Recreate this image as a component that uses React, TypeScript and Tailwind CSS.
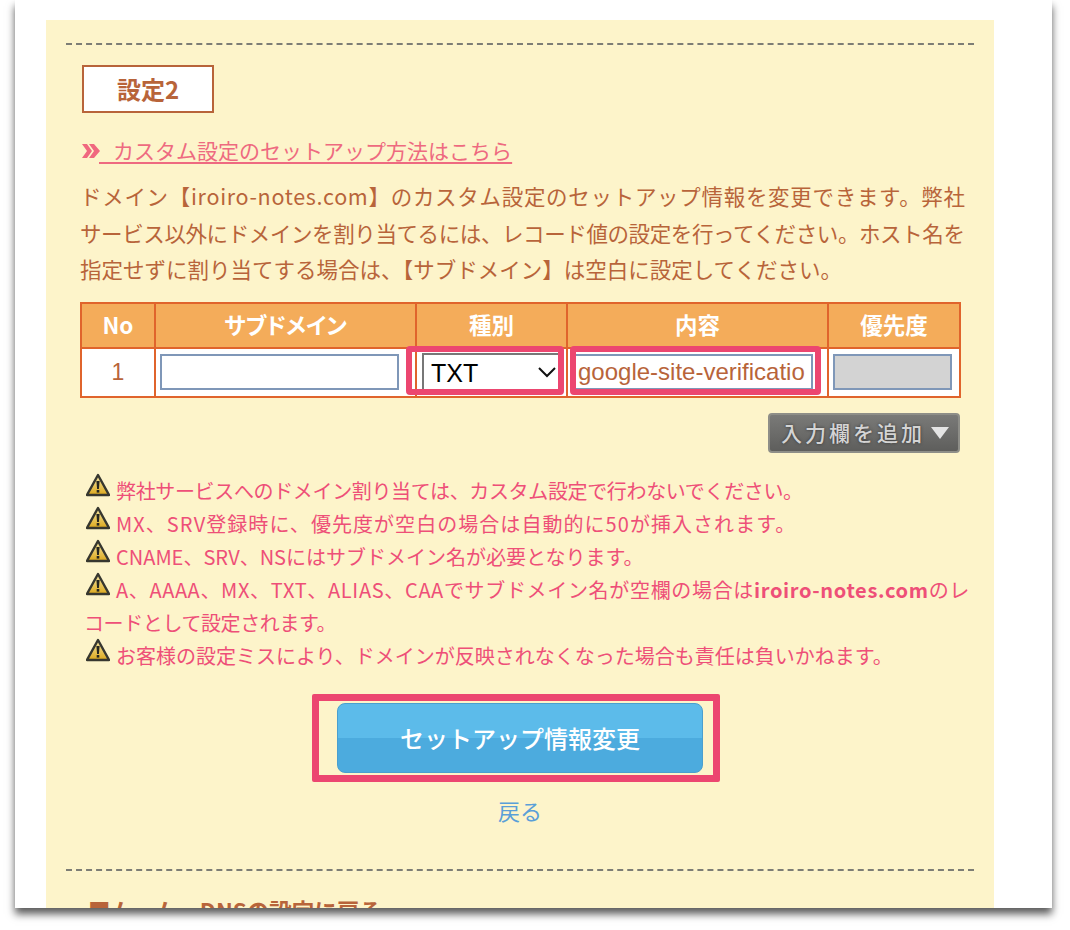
import React from "react";

const jp = "font-['Noto_Sans_CJK_JP','Noto_Sans',sans-serif]";

function Warn() {
  return (
    <svg width="24" height="24" viewBox="0 0 24 24" className="shrink-0">
      <defs>
        <linearGradient id="wg" x1="0" y1="0" x2="0" y2="1">
          <stop offset="0" stopColor="#f5e8a8" />
          <stop offset="1" stopColor="#dca81c" />
        </linearGradient>
      </defs>
      <path d="M12 2 L23 22 H1 Z" fill="url(#wg)" stroke="#37372f" strokeWidth="2.4" strokeLinejoin="round" />
      <path d="M10.4 8 H13.6 L12.9 16 H11.1 Z" fill="#26261f" />
      <rect x="10.7" y="17" width="2.6" height="2.6" fill="#26261f" />
    </svg>
  );
}

function Note({ children, className }: { children: React.ReactNode; className?: string }) {
  return (
    <div className="flex items-start h-[33px] whitespace-nowrap">
      <span className="w-[36px] pl-[6px] mt-[-1px] shrink-0"><Warn /></span>
      <span className={className}>{children}</span>
    </div>
  );
}

const th = "border-2 border-[#e0642c] bg-[#f4ac5a] text-white font-bold text-[22.5px] h-[45px] p-0 text-center [font-feature-settings:'palt']";
const td = "border-2 border-[#e0642c] bg-white p-0 relative h-[49px]";

export default function App() {
  return (
    <div className={`h-[930px] w-[1070px] bg-white overflow-hidden ${jp}`}>
      <div className="ml-[15px] w-[1037px] h-[908px] bg-white overflow-hidden pl-[31px] pt-[20px] shadow-[0_6px_8px_rgba(0,0,0,0.65)]">
        <div className="w-[948px] h-[900px] bg-[#fdf4ca] px-[20px] pt-[23px] text-[#b8643a]">
          <div className="border-t-2 border-dashed border-[#7d7d75]" />
          <div className="pl-[14px] pr-[2px]">
            <div className="ml-[2px] mt-[20px] w-[132px] h-[48px] border-2 border-[#b8643a] bg-white flex items-center justify-center font-bold text-[24px]">
              設定2
            </div>
            <div className="mt-[20px] h-[36px] flex items-center ml-[2px] text-[21px] text-[#ee6a80] whitespace-nowrap">
              <svg width="18" height="16" viewBox="0 0 18 16" className="shrink-0">
                <path d="M0 1 H5 L10 8 L5 15 H0 L5 8 Z M7 1 H12 L18 8 L12 15 H7 L12 8 Z" fill="#f0687f" />
              </svg>
              <a className="ml-[-1px] underline underline-offset-[3px] decoration-[1.5px] whitespace-pre">   カスタム設定のセットアップ方法はこちら</a>
            </div>
            <p className="mt-[9px] text-[21.5px] leading-[36.5px] whitespace-nowrap">
              <span className="tracking-[0.7px]">ドメイン【iroiro-notes.com】のカスタム設定のセットアップ情報を変更できます。弊社</span>
              <br />
              <span className="tracking-[-0.4px]">サービス以外にドメインを割り当てるには、レコード値の設定を行ってください。ホスト名を</span>
              <br />
              指定せずに割り当てする場合は、【サブドメイン】は空白に設定してください。
            </p>
            <table className="mt-[14px] w-[879px] border-collapse table-fixed">
              <colgroup>
                <col className="w-[74px]" />
                <col className="w-[261px]" />
                <col className="w-[151px]" />
                <col className="w-[261px]" />
                <col className="w-[132px]" />
              </colgroup>
              <thead>
                <tr>
                  <th className={th}>No</th>
                  <th className={th}>サブドメイン</th>
                  <th className={th}>種別</th>
                  <th className={th}>内容</th>
                  <th className={th}>優先度</th>
                </tr>
              </thead>
              <tbody>
                <tr>
                  <td className={`${td} text-center text-[23px] font-['Liberation_Sans',sans-serif]`}>1</td>
                  <td className={td}>
                    <div className="pl-[4px] pr-[16px]">
                      <input className="block w-full h-[36px] border-2 border-[#7f97b8] bg-white" />
                    </div>
                  </td>
                  <td className={td}>
                    <div className="relative ml-[5px] mr-[5px] h-[38px] border-l-2 border-t-2 border-[#777] bg-white">
                      <select defaultValue="TXT" className="appearance-none block w-full h-full bg-white text-black text-[25px] pl-[7px] pb-[3px] font-['Liberation_Sans',sans-serif] outline-none">
                        <option>TXT</option>
                      </select>
                      <svg width="20" height="12" viewBox="0 0 20 12" className="absolute right-[4px] top-[11px]">
                        <path d="M2 2 L10 10 L18 2" fill="none" stroke="#111" strokeWidth="2" />
                      </svg>
                    </div>
                    <div className="absolute left-[-11px] top-[-3px] w-[158px] h-[49px] border-[6px] border-[#ec4670] rounded-[4px]" />
                  </td>
                  <td className={td}>
                    <div className="pl-[5px] pr-[14px]">
                      <input readOnly value="google-site-verificatio" className="block w-full h-[36px] border-2 border-[#7f97b8] bg-white text-[#b8643a] text-[24px] pl-[3px] font-['Liberation_Sans',sans-serif]" />
                    </div>
                    <div className="absolute left-[2px] top-[-3px] w-[251px] h-[49px] border-[6px] border-[#ec4670] rounded-[4px]" />
                  </td>
                  <td className={td}>
                    <div className="pl-[4px] pr-[7px]">
                      <input disabled className="block w-full h-[36px] border-2 border-[#7f97b8] bg-[#d3d3d3]" />
                    </div>
                  </td>
                </tr>
              </tbody>
            </table>
            <div className="w-[880px] flex justify-end mt-[15px]">
              <button className="w-[192px] h-[40px] rounded-[4px] bg-[linear-gradient(#7a7a78,#5e5e5c)] border-2 border-[#8e8e88] flex items-center pl-[11px] gap-[5px] text-[#d4d4d4] font-medium text-[21px] tracking-[3px] [text-shadow:0_0_3px_#333]">
                入力欄を追加
                <svg width="20" height="14" viewBox="0 0 20 14"><path d="M1 1 H19 L10 13 Z" fill="#e4e4e4" /></svg>
              </button>
            </div>
            <div className="mt-[21px] text-[#ee4f78] text-[20px] leading-[33px]">
              <Note className="tracking-[-0.35px]">弊社サービスへのドメイン割り当ては、カスタム設定で行わないでください。</Note>
              <Note className="tracking-[1.05px]">MX、SRV登録時に、優先度が空白の場合は自動的に50が挿入されます。</Note>
              <Note>CNAME、SRV、NSにはサブドメイン名が必要となります。</Note>
              <Note className="tracking-[0.67px]">A、AAAA、MX、TXT、ALIAS、CAAでサブドメイン名が空欄の場合は<b className="font-bold">iroiro-notes.com</b>のレ</Note>
              <div className="h-[33px] pl-[4px] tracking-[-0.4px]">コードとして設定されます。</div>
              <Note>お客様の設定ミスにより、ドメインが反映されなくなった場合も責任は負いかねます。</Note>
            </div>
          </div>
          <div className="mt-[22px] flex justify-center">
            <div className="mr-[8px] w-[408px] h-[88px] border-[7px] border-[#ec4670] rounded-[2px] flex items-center justify-start pl-[18px]">
              <button className="shrink-0 w-[366px] h-[70px] rounded-[8px] border border-[#4a9fcf] bg-[linear-gradient(#5cbbea_50%,#4cabde_50%)] text-white text-[24px] font-medium">
                セットアップ情報変更
              </button>
            </div>
          </div>
          <div className="mt-[12px] text-center text-[22px] text-[#5a9fd8] leading-[32px]">戻る</div>
          <div className="mt-[43px] border-t-2 border-dashed border-[#7d7d75]" />
          <div className="mt-[23px] pl-[22px] font-bold text-[22.5px] whitespace-nowrap">■ムームーDNSの設定に戻る</div>
        </div>
      </div>
    </div>
  );
}
